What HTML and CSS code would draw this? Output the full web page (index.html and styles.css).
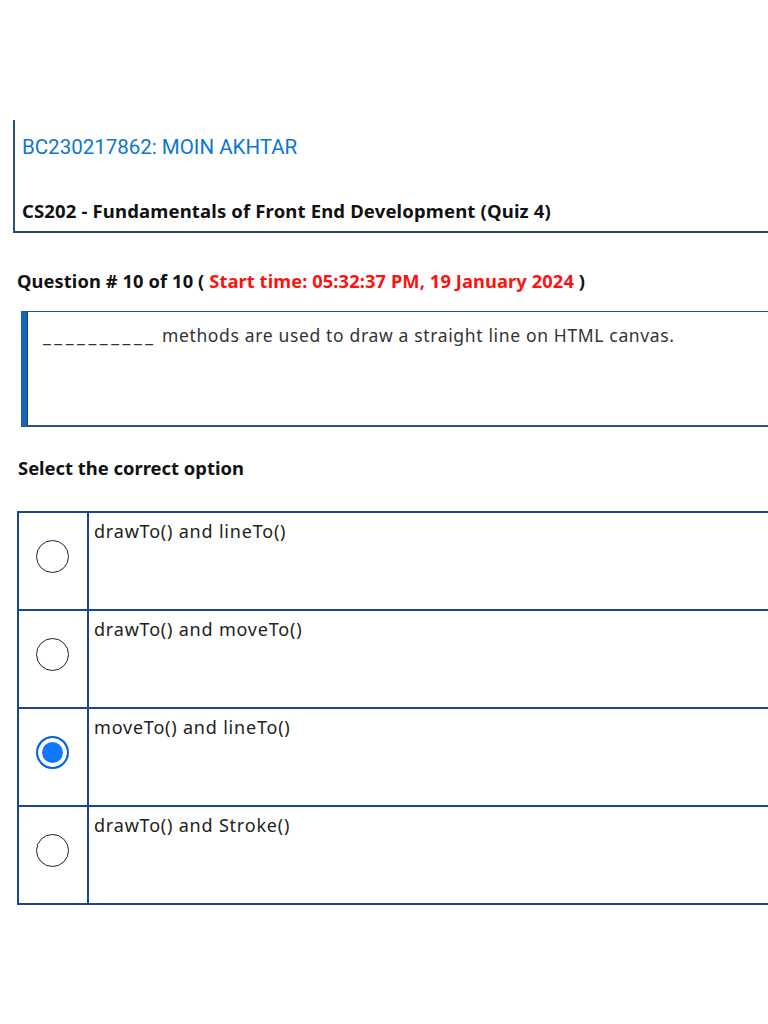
FILE: index.html
```html
<!DOCTYPE html>
<html lang="en">
<head>
    <meta charset="UTF-8">
    <meta name="viewport" content="width=device-width, initial-scale=1.0">
    <title>Quiz</title>
    <link rel="stylesheet" href="styles.css">
</head>
<body>

    <div class="header-box">
        <div class="student">BC230217862: MOIN AKHTAR</div>
        <div class="course">CS202 - Fundamentals of Front End Development (Quiz 4)</div>
    </div>

    <div class="question-title">
        Question # 10 of 10 ( <span class="start-time">Start time: 05:32:37 PM, 19 January 2024</span> )
    </div>

    <div class="question-box">
        <p class="question-text"><span class="blank">__________</span> methods are used to draw a straight line on HTML canvas.</p>
    </div>

    <div class="select-label">Select the correct option</div>

    <table class="options">
        <tr>
            <td class="radio-cell"><span class="radio"></span></td>
            <td class="option-text">drawTo() and lineTo()</td>
        </tr>
        <tr>
            <td class="radio-cell"><span class="radio"></span></td>
            <td class="option-text">drawTo() and moveTo()</td>
        </tr>
        <tr>
            <td class="radio-cell"><span class="radio checked"></span></td>
            <td class="option-text">moveTo() and lineTo()</td>
        </tr>
        <tr>
            <td class="radio-cell"><span class="radio"></span></td>
            <td class="option-text">drawTo() and Stroke()</td>
        </tr>
    </table>

</body>
</html>
```

FILE: styles.css
```css
body{
    margin: 0;
    background: #fff;
    font-family: "Noto Sans", "Open Sans", sans-serif;
    color: #222;
    overflow: hidden;
}
/* UST KUTU - ogrenci ve ders */
.header-box{
    margin-top: 120px;
    margin-left: 13px;
    height: 113px;
    border-left: 2px solid #2c4f7c;
    border-bottom: 2px solid #2a4570;
    box-sizing: border-box;
    padding-left: 7px;
}
.student{
    font-family: Roboto, "Liberation Sans", sans-serif;
    color: #0a78d1;
    font-size: 20.5px;
    padding-top: 15px;
    height: 50px;
}
.course{
    font-weight: 700;
    font-size: 18.5px;
    letter-spacing: 0.15px;
    color: #111;
    padding-top: 13px;
}
.question-title{
    margin-top: 35px;
    margin-left: 17px;
    font-weight: 700;
    font-size: 18.3px;
    letter-spacing: 0.1px;
    color: #111;
}
.start-time{
    color: #ff1111;
}
.question-box{
    margin-top: 18px;
    margin-left: 21px;
    height: 116px;
    box-sizing: border-box;
    border-top: 1px solid #2f4f85;
    border-bottom: 2px solid #2f4f85;
    border-left: 6px solid #1565b8;
    box-shadow: inset 1px 0 0 #0d3f7a;
}
.question-text{
    margin: 0;
    padding: 11px 0 0 16px;
    font-size: 17.5px;
    letter-spacing: 0.65px;
    color: #333;
}
.blank{
    letter-spacing: 3.6px;
}
.select-label{
    margin-top: 28px;
    margin-left: 18px;
    font-weight: 700;
    font-size: 18.4px;
    color: #111;
}
.options{
    margin-top: 31px;
    margin-left: 17px;
    width: 760px;
    border-collapse: collapse;
}
.options td{
    border: 2px solid #1d4597;
    height: 90px;
    vertical-align: top;
}
.radio-cell{
    width: 66px;
    text-align: center;
    vertical-align: middle !important;
}
.option-text{
    padding: 6px 0 0 5px;
    font-size: 18px;
    letter-spacing: 0.8px;
    color: #222;
}
.radio{
    display: inline-block;
    width: 33px;
    height: 33px;
    border: 1.5px solid #222;
    border-radius: 50%;
    box-sizing: border-box;
    margin-bottom: 4px;
    margin-right: 2px;
}
.radio.checked{
    border: 2px solid #0a63e0;
    background: #1177ff;
    box-shadow: inset 0 0 0 4px #fff;
}
```
